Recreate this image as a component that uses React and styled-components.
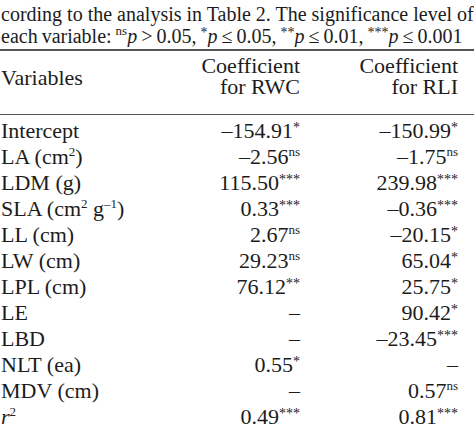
import React from "react";
import styled, { createGlobalStyle } from "styled-components";

const Global = createGlobalStyle`
  html, body { margin: 0; padding: 0; background: #fff; }
  body { font-family: "Liberation Serif", "Times New Roman", serif; color: #1c1c1c; }
`;

const Page = styled.div`
  width: 474px;
  height: 430px;
  overflow: hidden;
  font-size: 22px;
`;

const Caption = styled.div`
  padding: 3px 0 0 1px;
  font-size: 20px;
  line-height: 22px;
  white-space: nowrap;
  overflow: hidden;
`;

const CapLine = styled.div`
  word-spacing: ${(p) => (p.$tight ? "-1px" : "0")};
`;

const Table = styled.div`
  margin-top: 2px;
  border-top: 2px solid #555;
`;

const Row = styled.div`
  display: grid;
  grid-template-columns: 1fr 110px 158px;
  padding: 0 16px 0 1px;
  line-height: ${(p) => p.$lh || "26px"};
`;

const HeadRow = styled(Row)`
  padding-top: 4px;
  padding-bottom: 17px;
  border-bottom: 1.5px solid #555;
  margin-bottom: 3px;
  align-items: center;
`;

const Cell = styled.div`
  text-align: ${(p) => (p.$num ? "right" : "left")};
  white-space: nowrap;
  ${(p) => p.$shift && `padding-top: ${p.$shift};`}
`;

const Sup = styled.sup`
  font-size: ${(p) => (p.$star ? "14px" : "13px")};
  line-height: 0;
  vertical-align: ${(p) => (p.$star ? "6px" : "8px")};
`;

const It = styled.i`
  font-style: italic;
`;

const Mark = ({ s }) =>
  s ? <Sup $star={s !== "ns"}>{s}</Sup> : null;

const rows = [
  [<>Intercept</>, "–154.91", "*", "–150.99", "*"],
  [<>LA (cm<Sup>2</Sup>)</>, "–2.56", "ns", "–1.75", "ns"],
  [<>LDM (g)</>, "115.50", "***", "239.98", "***"],
  [<>SLA (cm<Sup>2</Sup> g<Sup>–1</Sup>)</>, "0.33", "***", "–0.36", "***"],
  [<>LL (cm)</>, "2.67", "ns", "–20.15", "*"],
  [<>LW (cm)</>, "29.23", "ns", "65.04", "*"],
  [<>LPL (cm)</>, "76.12", "**", "25.75", "*"],
  [<>LE</>, "–", "", "90.42", "*"],
  [<>LBD</>, "–", "", "–23.45", "***"],
  [<>NLT (ea)</>, "0.55", "*", "–", ""],
  [<>MDV (cm)</>, "–", "", "0.57", "ns"],
  [<><It>r</It><Sup>2</Sup></>, "0.49", "***", "0.81", "***"],
];

export default function App() {
  return (
    <>
      <Global />
      <Page>
        <Caption>
          <CapLine>
            cording to the analysis in Table 2. The significance level of
          </CapLine>
          <CapLine $tight>
            each variable: <Sup>ns</Sup><It>p</It> &gt; 0.05,{" "}
            <Sup $star>*</Sup><It>p</It> ≤ 0.05, <Sup $star>**</Sup>
            <It>p</It> ≤ 0.01, <Sup $star>***</Sup><It>p</It> ≤ 0.001
          </CapLine>
        </Caption>
        <Table>
          <HeadRow $lh="21px">
            <Cell $shift="3px">Variables</Cell>
            <Cell $num>
              Coefficient
              <br />
              for RWC
            </Cell>
            <Cell $num>
              Coefficient
              <br />
              for RLI
            </Cell>
          </HeadRow>
          {rows.map((r, i) => (
            <Row key={i}>
              <Cell>{r[0]}</Cell>
              <Cell $num>
                {r[1]}
                <Mark s={r[2]} />
              </Cell>
              <Cell $num>
                {r[3]}
                <Mark s={r[4]} />
              </Cell>
            </Row>
          ))}
        </Table>
      </Page>
    </>
  );
}
